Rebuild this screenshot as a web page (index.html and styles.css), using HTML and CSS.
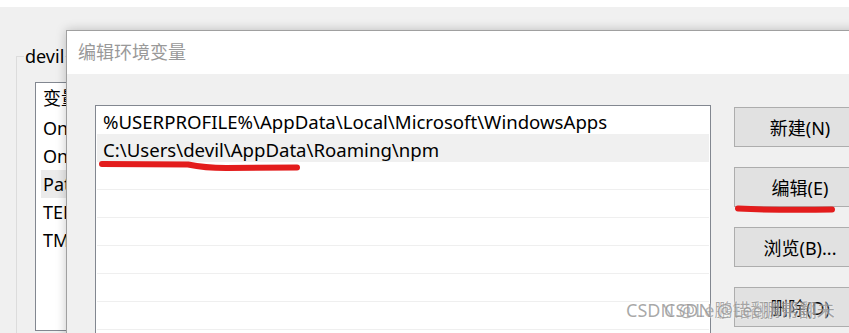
FILE: index.html
```html
<!DOCTYPE html>
<html lang="zh-CN">
<head>
  <meta charset="UTF-8">
  <title>编辑环境变量</title>
  <link rel="stylesheet" href="styles.css">
</head>
<body>
  <div class="desktop">
    <!-- parent window: user variables -->
    <div class="main-window">
      <div class="group">
        <span class="group-title">devil</span>
        <div class="var-list">
          <div class="var-head">变量</div>
          <div class="var-row">OneDrive</div>
          <div class="var-row">OneDriveConsumer</div>
          <div class="var-row selected">Path</div>
          <div class="var-row">TEMP</div>
          <div class="var-row">TMP</div>
        </div>
      </div>
    </div>

    <!-- edit dialog -->
    <div class="dialog">
      <div class="dialog-title">编辑环境变量</div>
      <div class="dialog-body">
        <div class="path-list">
          <div class="path-row">%USERPROFILE%\AppData\Local\Microsoft\WindowsApps</div>
          <div class="path-row selected">C:\Users\devil\AppData\Roaming\npm</div>
          <div class="path-row empty"></div>
          <div class="path-row empty"></div>
          <div class="path-row empty"></div>
          <div class="path-row empty"></div>
          <div class="path-row empty"></div>
          <div class="path-row empty"></div>
        </div>
        <div class="btn-col">
          <button class="btn">新建(N)</button>
          <button class="btn">编辑(E)</button>
          <button class="btn">浏览(B)...</button>
          <button class="btn">删除(D)</button>
        </div>
      </div>
    </div>

    <svg class="marks" width="849" height="333" viewBox="0 0 849 333">
      <path d="M102 164 L188 164.5 Q205 168 226 168 L297 167.5" />
      <path d="M738 208.5 Q780 210.5 832 209.5" />
    </svg>

    <div class="watermark">
      <span class="wm">CSDN @Le鹏错翻</span>
      <span class="wm second">CSDN @Lee鹏帮翻未</span>
    </div>
  </div>
</body>
</html>
```

FILE: styles.css
```css
* {
  box-sizing: border-box;
}
body {
  margin: 0;
  background: #f0f0f0;
  font-family: "Noto Sans", "Noto Sans CJK SC", sans-serif;
  font-size: 18px;
  color: #000;
  overflow: hidden;
}
.desktop {
  position: relative;
  width: 849px;
  height: 333px;
  border-top: 7px solid #fff;
  overflow: hidden;
}
.main-window {
  padding: 49px 0 0 16px;
}
.group {
  border-left: 1px solid #dcdcdc;
  border-top: 1px solid #dcdcdc;
  padding-left: 18px;
  height: 300px;
}
.group-title {
  display: block;
  width: fit-content;
  margin: -13px 0 0 -11px;
  padding: 0 1px;
  line-height: 24px;
  background: #f0f0f0;
}
.var-list {
  margin-top: 14px;
  width: 220px;
  height: 249px;
  background: #fff;
  border: 1px solid #828790;
  padding: 1px 5px;
}
.var-head {
  height: 30px;
  line-height: 28px;
  padding-left: 2px;
}
.var-row {
  height: 28px;
  line-height: 28px;
  padding-left: 2px;
  white-space: nowrap;
}
.var-row.selected {
  background: #ebebeb;
}
.dialog {
  position: absolute;
  left: 66px;
  top: 23px;
  width: 820px;
  height: 330px;
  border: 1px solid #a0a0a0;
  background: #f0f0f0;
  box-shadow: 0 0 10px rgba(0, 0, 0, 0.22);
}
.dialog-title {
  height: 43px;
  line-height: 43px;
  padding-left: 11px;
  background: #fff;
  color: #999;
}
.dialog-body {
  display: flex;
  align-items: flex-start;
  gap: 23px;
  padding: 31px 0 0 28px;
}
.path-list {
  width: 616px;
  height: 240px;
  background: #fff;
  border: 1px solid #828790;
  padding: 0 1px;
  flex-shrink: 0;
}
.path-row {
  height: 28px;
  line-height: 31px;
  padding-left: 6px;
  font-size: 18.6px;
  white-space: nowrap;
}
.path-row.selected {
  background: #f0f0f0;
}
.path-row.empty {
  border-bottom: 1px solid #efefef;
}
.btn-col {
  display: flex;
  flex-direction: column;
  gap: 20px;
  padding-top: 2px;
}
.btn {
  width: 132px;
  height: 40px;
  background: #e1e1e1;
  border: 1px solid #adadad;
  font-family: inherit;
  font-size: 18px;
  color: #000;
  padding: 0;
}
.marks {
  position: absolute;
  left: 0;
  top: -7px;
  pointer-events: none;
}
.marks path {
  fill: none;
  stroke: #e31c1c;
  stroke-width: 6;
  stroke-linecap: round;
}
.watermark {
  position: absolute;
  left: 626px;
  top: 291px;
  font-size: 18px;
  line-height: 24px;
}
.wm {
  position: absolute;
  left: 0;
  top: 0;
  white-space: nowrap;
  color: rgba(110, 110, 110, 0.6);
  text-shadow: 0 0 2px #fff;
}
.wm.second {
  left: 38px;
}
```
